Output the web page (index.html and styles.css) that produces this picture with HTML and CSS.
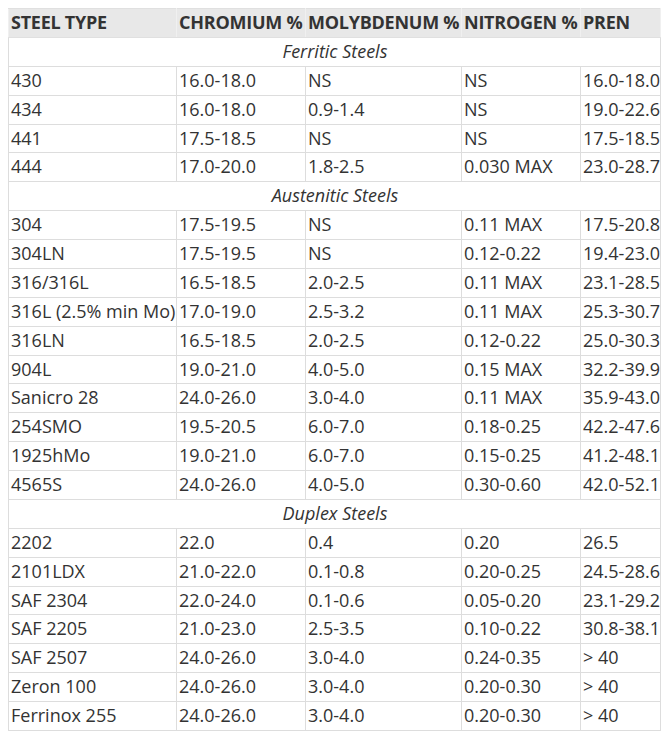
FILE: index.html
```html
<!DOCTYPE html>
<html>
<head>
<meta charset="utf-8">
<link rel="stylesheet" href="styles.css">
</head>
<body>
<table class="steel">
<colgroup>
<col class="c-type"><col class="c-cr"><col class="c-mo"><col class="c-n"><col class="c-pren">
</colgroup>
<thead>
<tr><th>STEEL TYPE</th><th>CHROMIUM %</th><th>MOLYBDENUM %</th><th>NITROGEN %</th><th>PREN</th></tr>
</thead>
<tbody>
<tr class="section"><td colspan="5">Ferritic Steels</td></tr>
<tr><td>430</td><td>16.0-18.0</td><td>NS</td><td>NS</td><td>16.0-18.0</td></tr>
<tr><td>434</td><td>16.0-18.0</td><td>0.9-1.4</td><td>NS</td><td>19.0-22.6</td></tr>
<tr><td>441</td><td>17.5-18.5</td><td>NS</td><td>NS</td><td>17.5-18.5</td></tr>
<tr><td>444</td><td>17.0-20.0</td><td>1.8-2.5</td><td>0.030 MAX</td><td>23.0-28.7</td></tr>
<tr class="section"><td colspan="5">Austenitic Steels</td></tr>
<tr><td>304</td><td>17.5-19.5</td><td>NS</td><td>0.11 MAX</td><td>17.5-20.8</td></tr>
<tr><td>304LN</td><td>17.5-19.5</td><td>NS</td><td>0.12-0.22</td><td>19.4-23.0</td></tr>
<tr><td>316/316L</td><td>16.5-18.5</td><td>2.0-2.5</td><td>0.11 MAX</td><td>23.1-28.5</td></tr>
<tr><td>316L (2.5% min Mo)</td><td>17.0-19.0</td><td>2.5-3.2</td><td>0.11 MAX</td><td>25.3-30.7</td></tr>
<tr><td>316LN</td><td>16.5-18.5</td><td>2.0-2.5</td><td>0.12-0.22</td><td>25.0-30.3</td></tr>
<tr><td>904L</td><td>19.0-21.0</td><td>4.0-5.0</td><td>0.15 MAX</td><td>32.2-39.9</td></tr>
<tr><td>Sanicro 28</td><td>24.0-26.0</td><td>3.0-4.0</td><td>0.11 MAX</td><td>35.9-43.0</td></tr>
<tr><td>254SMO</td><td>19.5-20.5</td><td>6.0-7.0</td><td>0.18-0.25</td><td>42.2-47.6</td></tr>
<tr><td>1925hMo</td><td>19.0-21.0</td><td>6.0-7.0</td><td>0.15-0.25</td><td>41.2-48.1</td></tr>
<tr><td>4565S</td><td>24.0-26.0</td><td>4.0-5.0</td><td>0.30-0.60</td><td>42.0-52.1</td></tr>
<tr class="section"><td colspan="5">Duplex Steels</td></tr>
<tr><td>2202</td><td>22.0</td><td>0.4</td><td>0.20</td><td>26.5</td></tr>
<tr><td>2101LDX</td><td>21.0-22.0</td><td>0.1-0.8</td><td>0.20-0.25</td><td>24.5-28.6</td></tr>
<tr><td>SAF 2304</td><td>22.0-24.0</td><td>0.1-0.6</td><td>0.05-0.20</td><td>23.1-29.2</td></tr>
<tr><td>SAF 2205</td><td>21.0-23.0</td><td>2.5-3.5</td><td>0.10-0.22</td><td>30.8-38.1</td></tr>
<tr><td>SAF 2507</td><td>24.0-26.0</td><td>3.0-4.0</td><td>0.24-0.35</td><td>&gt; 40</td></tr>
<tr><td>Zeron 100</td><td>24.0-26.0</td><td>3.0-4.0</td><td>0.20-0.30</td><td>&gt; 40</td></tr>
<tr><td>Ferrinox 255</td><td>24.0-26.0</td><td>3.0-4.0</td><td>0.20-0.30</td><td>&gt; 40</td></tr>
</tbody>
</table>
</body>
</html>
```

FILE: styles.css
```css
html, body {
  background: #ffffff;
}
body {
  margin: 8px;
  font-family: "Open Sans", "Liberation Sans", sans-serif;
  font-size: 18px;
  color: #333333;
}
.steel {
  border-collapse: collapse;
  border: 1px solid #dddddd;
  table-layout: fixed;
  width: 653px;
}
.c-type { width: 168px; }
.c-cr { width: 129px; }
.c-mo { width: 156px; }
.c-n { width: 119px; }
.c-pren { width: 80px; }
.steel th,
.steel td {
  border: 1px solid #dddddd;
  padding: 3px 1px 3px 2px;
  line-height: 21.88px;
  text-align: left;
  vertical-align: middle;
  white-space: nowrap;
  overflow: hidden;
}
.steel th {
  background: #e8e8e8;
  font-weight: 700;
  color: #333333;
  letter-spacing: -0.25px;
  border-color: #e0e0e0;
  border-left-color: #f0f0f0;
  border-right-color: #f0f0f0;
}
.steel .section td {
  text-align: center;
  font-style: italic;
}
```
